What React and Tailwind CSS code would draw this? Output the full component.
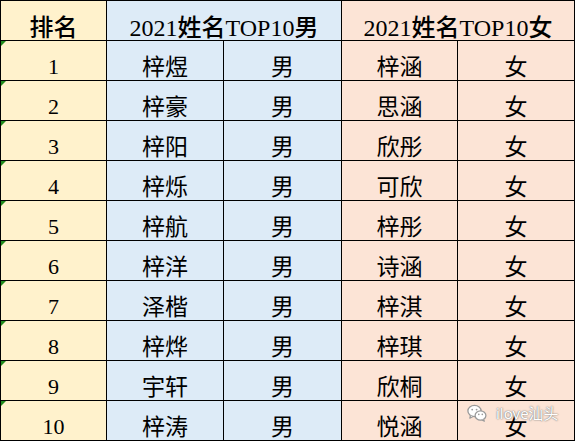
import React from "react";

const rows = [
  ["1", "梓煜", "梓涵"],
  ["2", "梓豪", "思涵"],
  ["3", "梓阳", "欣彤"],
  ["4", "梓烁", "可欣"],
  ["5", "梓航", "梓彤"],
  ["6", "梓洋", "诗涵"],
  ["7", "泽楷", "梓淇"],
  ["8", "梓烨", "梓琪"],
  ["9", "宇轩", "欣桐"],
  ["10", "梓涛", "悦涵"],
];

const font = { fontFamily: '"Liberation Serif", "Noto Sans CJK SC", serif' };

function WeChatIcon() {
  return (
    <svg width="20" height="18" viewBox="0 0 20 18">
      <ellipse cx="7.5" cy="7" rx="6.6" ry="5.6" fill="#fff" stroke="#9a9a9a" strokeWidth="1.3" />
      <path d="M3.5 11.5 L2.8 14.2 L6 12.4" fill="#fff" stroke="#9a9a9a" strokeWidth="1.2" strokeLinejoin="round" />
      <circle cx="5.2" cy="5.6" r="0.9" fill="#9a9a9a" />
      <circle cx="9.6" cy="5.6" r="0.9" fill="#9a9a9a" />
      <ellipse cx="13.5" cy="11.5" rx="5.4" ry="4.6" fill="#fff" stroke="#9a9a9a" strokeWidth="1.3" />
      <path d="M16.5 15.2 L17.4 17.3 L14.8 16" fill="#fff" stroke="#9a9a9a" strokeWidth="1.1" strokeLinejoin="round" />
      <circle cx="11.8" cy="10.4" r="0.8" fill="#9a9a9a" />
      <circle cx="15.3" cy="10.4" r="0.8" fill="#9a9a9a" />
    </svg>
  );
}

export default function App() {
  const cell = "flex items-end justify-center leading-none text-black";
  return (
    <div className="relative w-[575px] h-[441px] bg-white" style={font}>
      <div className="grid grid-cols-[105px_116px_117px_115px_116px] auto-rows-[39px] gap-px p-px bg-black w-[575px] h-[441px]">
        <div className={`${cell} bg-[#fff2cc] text-[24px] font-medium pb-0`}>排名</div>
        <div className={`${cell} col-span-2 bg-[#ddebf7] text-[24px] font-medium pb-0`}>2021姓名TOP10男</div>
        <div className={`${cell} col-span-2 bg-[#fce4d6] text-[24px] font-medium pb-0`}>2021姓名TOP10女</div>
        {rows.map(([n, boy, girl]) => (
          <React.Fragment key={n}>
            <div className={`${cell} relative bg-[#fff2cc] text-[22px] pb-[2px]`}>
              <span className="absolute left-0 top-0 w-0 h-0 border-t-[5px] border-r-[5px] border-t-[#1e8a1e] border-r-transparent" />
              {n}
            </div>
            <div className={`${cell} bg-[#ddebf7] text-[23px] pb-[1px]`}>{boy}</div>
            <div className={`${cell} bg-[#ddebf7] text-[23px] pb-[1px]`}>男</div>
            <div className={`${cell} bg-[#fce4d6] text-[23px] pb-[1px]`}>{girl}</div>
            <div className={`${cell} bg-[#fce4d6] text-[23px] pb-[1px]`}>女</div>
          </React.Fragment>
        ))}
      </div>
      <div className="absolute left-[467px] top-[404px] flex items-center gap-[9px]">
        <WeChatIcon />
        <span
          className="text-[15px] text-white leading-none [text-shadow:0_0_1px_#777,0_0_2px_#888]"
          style={{ fontFamily: '"Noto Sans", "Noto Sans CJK SC", sans-serif' }}
        >
          ilove汕头
        </span>
      </div>
    </div>
  );
}
